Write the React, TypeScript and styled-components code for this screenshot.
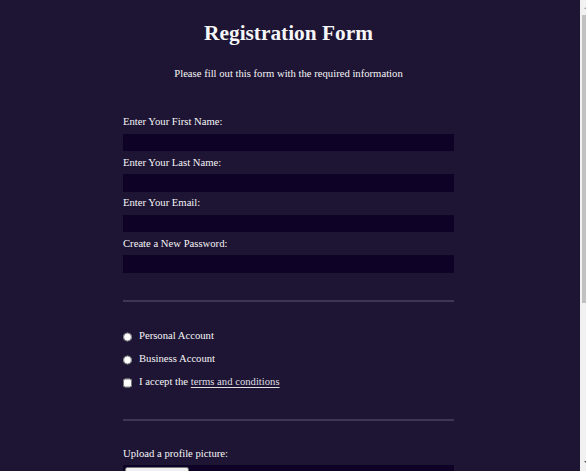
import React from "react";
import styled, { createGlobalStyle } from "styled-components";

const GlobalStyle = createGlobalStyle`
  html, body {
    margin: 0;
    height: 100%;
    overflow: hidden;
    background-color: #1e1433;
  }
  body {
    color: #f5f6f7;
    font-family: "Liberation Serif", "Times New Roman", serif;
    font-size: 10.667px;
  }
`;

const Page = styled.div`
  box-sizing: border-box;
  height: 100vh;
  overflow-y: scroll;
  padding-right: 9px;
  background-color: #1e1433;
  scrollbar-width: none;
`;

const ScrollTrack = styled.div`
  position: fixed;
  top: 0;
  right: 0;
  bottom: 0;
  width: 6px;
  background-color: #f1f1f1;
`;

const ScrollThumb = styled.div`
  position: absolute;
  top: 15px;
  left: 2px;
  right: 0;
  height: 288px;
  background-color: #c1c1c1;
`;

const ScrollArrow = styled.span<{ $down?: boolean }>`
  position: absolute;
  right: 0;
  ${(p) => (p.$down ? "bottom: 8px;" : "top: 7px;")}
  width: 0;
  height: 0;
  border-left: 2px solid transparent;
  border-right: 0 solid transparent;
  ${(p) =>
    p.$down ? "border-top: 2px solid #505050;" : "border-bottom: 2px solid #a3a3a3;"}
`;

const Title = styled.h1`
  margin: 21.333px auto;
  text-align: center;
  font-size: 21.333px;
  font-weight: bold;
`;

const Subtitle = styled.p`
  margin: 10.667px auto;
  text-align: center;
`;

const Form = styled.form`
  width: 331px;
  margin: 0 auto;
  padding-bottom: 21.333px;
`;

const Fieldset = styled.fieldset<{ $divider?: boolean }>`
  border: none;
  margin: 0;
  padding: 21.333px 0;
  min-width: 0;
  border-bottom: ${(p) => (p.$divider ? "2px solid #403554" : "none")};
`;

const FieldLabel = styled.label`
  display: block;
  margin: 5.333px 0;
`;

const TextInput = styled.input`
  display: block;
  box-sizing: border-box;
  width: 100%;
  height: 17.6px;
  margin: 6.667px 0 0 0;
  padding: 0.667px 1.333px;
  background-color: #0e0226;
  border: 0.667px solid #0e0226;
  color: #ffffff;
  font-size: 8.889px;
  outline: none;
`;

const FileInput = styled(TextInput)`
  height: auto;
  min-height: 17.778px;
  padding: 0.667px 1.333px;
`;

const Choice = styled.input`
  width: 9px;
  height: 17.778px;
  margin: 0 4.333px 0 0;
  vertical-align: middle;
`;

const Select = styled.select`
  display: block;
  width: 100%;
  min-height: 17.778px;
  margin: 6.667px 0 0 0;
  font-size: 8.889px;
`;

const TextArea = styled.textarea`
  display: block;
  box-sizing: border-box;
  width: 100%;
  margin: 6.667px 0 0 0;
  background-color: #0e0226;
  border: 0.667px solid #0e0226;
  color: #ffffff;
  font-size: 8.889px;
  resize: none;
`;

const Terms = styled.a`
  color: #dfdfe2;
`;

const Submit = styled.input`
  display: block;
  width: 60%;
  min-width: 200px;
  height: 23.5px;
  margin: 10.667px auto;
  font-size: 11.733px;
  background-color: #403554;
  border: 1.333px solid #ffffff;
  color: #000000;
`;

function App() {
  return (
    <Page>
      <GlobalStyle />
      <Title>Registration Form</Title>
      <Subtitle>Please fill out this form with the required information</Subtitle>
      <Form onSubmit={(e) => e.preventDefault()}>
        <Fieldset $divider>
          <FieldLabel>
            Enter Your First Name: <TextInput type="text" />
          </FieldLabel>
          <FieldLabel>
            Enter Your Last Name: <TextInput type="text" />
          </FieldLabel>
          <FieldLabel>
            Enter Your Email: <TextInput type="email" />
          </FieldLabel>
          <FieldLabel>
            Create a New Password: <TextInput type="password" />
          </FieldLabel>
        </Fieldset>
        <Fieldset $divider>
          <FieldLabel>
            <Choice type="radio" name="account-type" /> Personal Account
          </FieldLabel>
          <FieldLabel>
            <Choice type="radio" name="account-type" /> Business Account
          </FieldLabel>
          <FieldLabel>
            <Choice type="checkbox" /> I accept the{" "}
            <Terms href="#terms">terms and conditions</Terms>
          </FieldLabel>
        </Fieldset>
        <Fieldset>
          <FieldLabel>
            Upload a profile picture: <FileInput type="file" />
          </FieldLabel>
          <FieldLabel>
            Input your age (years): <TextInput type="number" min={13} max={120} />
          </FieldLabel>
          <FieldLabel>
            How did you hear about us?
            <Select defaultValue="">
              <option value="">(select one)</option>
              <option value="1">freeCodeCamp News</option>
              <option value="2">freeCodeCamp YouTube Channel</option>
              <option value="3">freeCodeCamp Forum</option>
              <option value="4">Other</option>
            </Select>
          </FieldLabel>
          <FieldLabel>
            Provide a bio:
            <TextArea rows={3} cols={30} placeholder="I like coding on the beach..." />
          </FieldLabel>
        </Fieldset>
        <Submit type="submit" value="Submit" />
      </Form>
      <ScrollTrack>
        <ScrollArrow />
        <ScrollThumb />
        <ScrollArrow $down />
      </ScrollTrack>
    </Page>
  );
}

export default App;
